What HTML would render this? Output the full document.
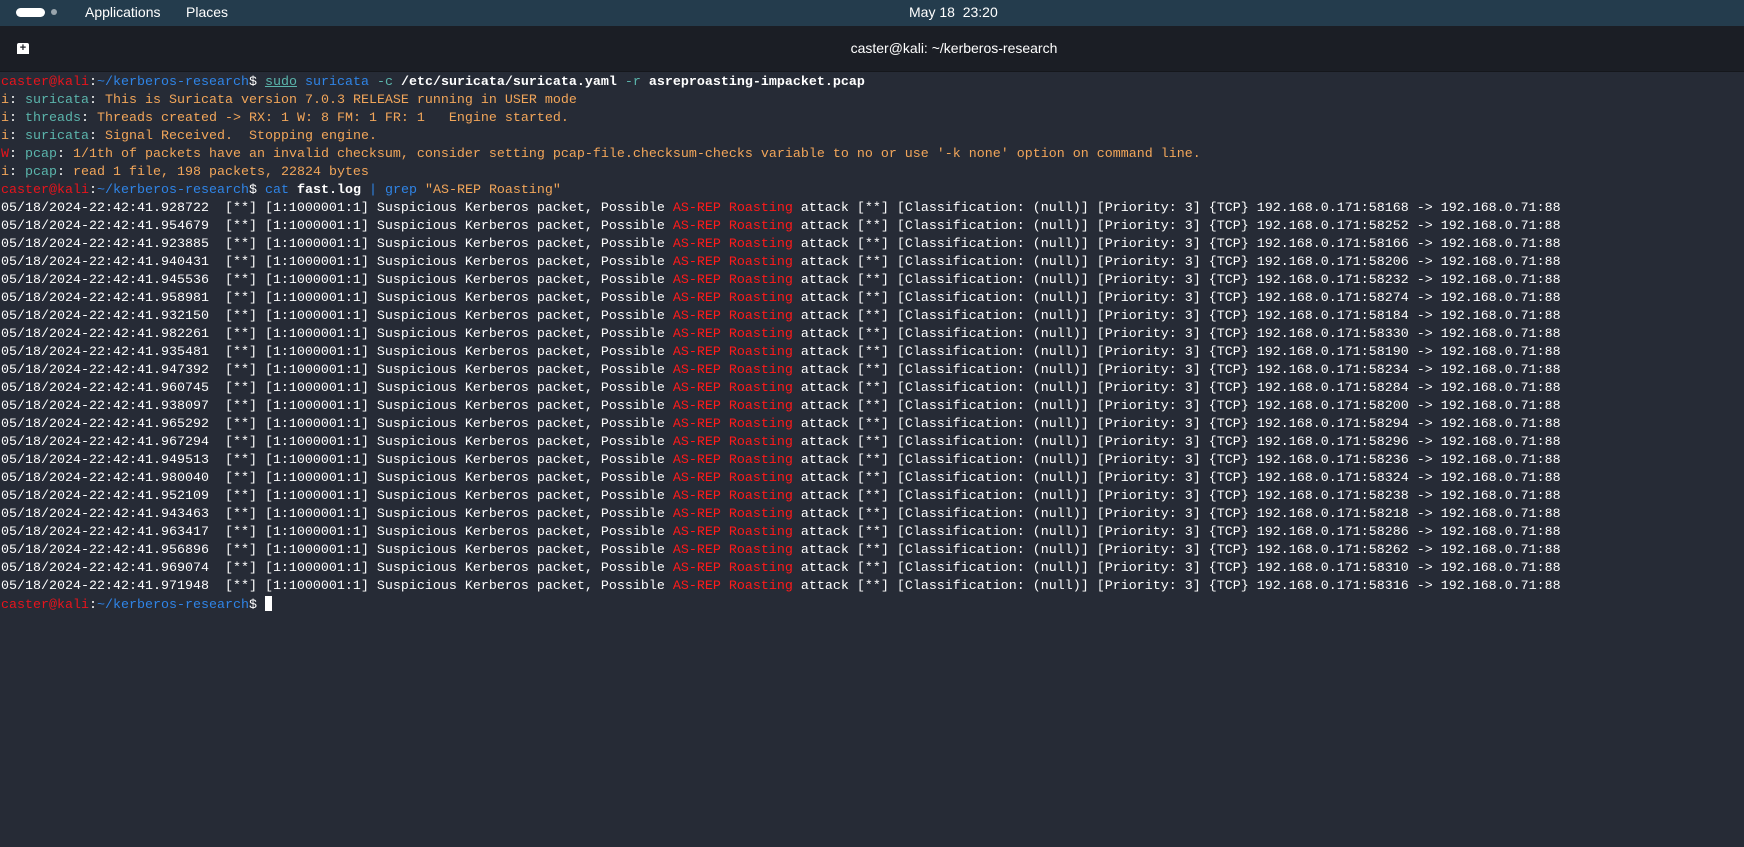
<!DOCTYPE html>
<html><head><meta charset="utf-8"><style>
body{margin:0;width:1744px;height:847px;overflow:hidden;background:#262b36;font-family:"Liberation Sans",sans-serif;position:relative}
#top{position:absolute;left:0;top:0;width:1744px;height:26px;background:#243c4d;color:#fff;font-size:14px}
#top span{position:absolute;top:4px}
#title{position:absolute;left:0;top:26px;width:1744px;height:46px;background:#1b1e25;border-bottom:1px solid #15171c;box-sizing:border-box}
#title .t{position:absolute;left:0;width:1908px;text-align:center;top:14px;color:#fff;font-size:14px}
#term{position:absolute;left:1px;top:74px;font-family:"Liberation Mono",monospace;font-size:13.33px;line-height:18px;color:#fff;white-space:pre}
.r{color:#e8141c}.b{color:#2f84e6}.g{color:#5bb5ac}.o{color:#f2a65a}.R{color:#ff1a1a}.w{color:#fff;font-weight:bold}
.cur{display:inline-block;width:7px;height:15px;background:#fff;vertical-align:-3px}
</style></head><body>
<div id="top">
<div style="position:absolute;left:16px;top:8px;width:29px;height:9px;border-radius:5px;background:#fff"></div>
<div style="position:absolute;left:51px;top:9px;width:6px;height:6px;border-radius:3px;background:#9aa5ad"></div>
<span style="left:85px">Applications</span><span style="left:186px">Places</span>
<span style="left:909px">May 18&nbsp; 23:20</span>
</div>
<div id="title">
<div style="position:absolute;left:17px;top:17px;width:12px;height:11px;background:#fff;border-radius:2px 2px 0 0;color:#1b1e25;font:bold 11px/11px 'Liberation Sans';text-align:center">+</div>
<div class="t">caster@kali: ~/kerberos-research</div>
</div>
<div id="term"><span class="r">caster@kali</span>:<span class="b">~/kerberos-research</span>$ <span class="g" style="text-decoration:underline">sudo</span> <span class="b">suricata</span> <span class="g">-c</span> <span class="w">/etc/suricata/suricata.yaml</span> <span class="g">-r</span> <span class="w">asreproasting-impacket.pcap</span>
<span class="o">i</span>: <span class="g">suricata</span>: <span class="o">This is Suricata version 7.0.3 RELEASE running in USER mode</span>
<span class="o">i</span>: <span class="g">threads</span>: <span class="o">Threads created -&gt; RX: 1 W: 8 FM: 1 FR: 1   Engine started.</span>
<span class="o">i</span>: <span class="g">suricata</span>: <span class="o">Signal Received.  Stopping engine.</span>
<span class="r">W</span>: <span class="g">pcap</span>: <span class="o">1/1th of packets have an invalid checksum, consider setting pcap-file.checksum-checks variable to no or use '-k none' option on command line.</span>
<span class="o">i</span>: <span class="g">pcap</span>: <span class="o">read 1 file, 198 packets, 22824 bytes</span>
<span class="r">caster@kali</span>:<span class="b">~/kerberos-research</span>$ <span class="b">cat</span> <span class="w">fast.log</span> <span class="b">|</span> <span class="b">grep</span> <span class="o">"AS-REP Roasting"</span>
05/18/2024-22:42:41.928722  [**] [1:1000001:1] Suspicious Kerberos packet, Possible <span class="R">AS-REP Roasting</span> attack [**] [Classification: (null)] [Priority: 3] {TCP} 192.168.0.171:58168 -&gt; 192.168.0.71:88
05/18/2024-22:42:41.954679  [**] [1:1000001:1] Suspicious Kerberos packet, Possible <span class="R">AS-REP Roasting</span> attack [**] [Classification: (null)] [Priority: 3] {TCP} 192.168.0.171:58252 -&gt; 192.168.0.71:88
05/18/2024-22:42:41.923885  [**] [1:1000001:1] Suspicious Kerberos packet, Possible <span class="R">AS-REP Roasting</span> attack [**] [Classification: (null)] [Priority: 3] {TCP} 192.168.0.171:58166 -&gt; 192.168.0.71:88
05/18/2024-22:42:41.940431  [**] [1:1000001:1] Suspicious Kerberos packet, Possible <span class="R">AS-REP Roasting</span> attack [**] [Classification: (null)] [Priority: 3] {TCP} 192.168.0.171:58206 -&gt; 192.168.0.71:88
05/18/2024-22:42:41.945536  [**] [1:1000001:1] Suspicious Kerberos packet, Possible <span class="R">AS-REP Roasting</span> attack [**] [Classification: (null)] [Priority: 3] {TCP} 192.168.0.171:58232 -&gt; 192.168.0.71:88
05/18/2024-22:42:41.958981  [**] [1:1000001:1] Suspicious Kerberos packet, Possible <span class="R">AS-REP Roasting</span> attack [**] [Classification: (null)] [Priority: 3] {TCP} 192.168.0.171:58274 -&gt; 192.168.0.71:88
05/18/2024-22:42:41.932150  [**] [1:1000001:1] Suspicious Kerberos packet, Possible <span class="R">AS-REP Roasting</span> attack [**] [Classification: (null)] [Priority: 3] {TCP} 192.168.0.171:58184 -&gt; 192.168.0.71:88
05/18/2024-22:42:41.982261  [**] [1:1000001:1] Suspicious Kerberos packet, Possible <span class="R">AS-REP Roasting</span> attack [**] [Classification: (null)] [Priority: 3] {TCP} 192.168.0.171:58330 -&gt; 192.168.0.71:88
05/18/2024-22:42:41.935481  [**] [1:1000001:1] Suspicious Kerberos packet, Possible <span class="R">AS-REP Roasting</span> attack [**] [Classification: (null)] [Priority: 3] {TCP} 192.168.0.171:58190 -&gt; 192.168.0.71:88
05/18/2024-22:42:41.947392  [**] [1:1000001:1] Suspicious Kerberos packet, Possible <span class="R">AS-REP Roasting</span> attack [**] [Classification: (null)] [Priority: 3] {TCP} 192.168.0.171:58234 -&gt; 192.168.0.71:88
05/18/2024-22:42:41.960745  [**] [1:1000001:1] Suspicious Kerberos packet, Possible <span class="R">AS-REP Roasting</span> attack [**] [Classification: (null)] [Priority: 3] {TCP} 192.168.0.171:58284 -&gt; 192.168.0.71:88
05/18/2024-22:42:41.938097  [**] [1:1000001:1] Suspicious Kerberos packet, Possible <span class="R">AS-REP Roasting</span> attack [**] [Classification: (null)] [Priority: 3] {TCP} 192.168.0.171:58200 -&gt; 192.168.0.71:88
05/18/2024-22:42:41.965292  [**] [1:1000001:1] Suspicious Kerberos packet, Possible <span class="R">AS-REP Roasting</span> attack [**] [Classification: (null)] [Priority: 3] {TCP} 192.168.0.171:58294 -&gt; 192.168.0.71:88
05/18/2024-22:42:41.967294  [**] [1:1000001:1] Suspicious Kerberos packet, Possible <span class="R">AS-REP Roasting</span> attack [**] [Classification: (null)] [Priority: 3] {TCP} 192.168.0.171:58296 -&gt; 192.168.0.71:88
05/18/2024-22:42:41.949513  [**] [1:1000001:1] Suspicious Kerberos packet, Possible <span class="R">AS-REP Roasting</span> attack [**] [Classification: (null)] [Priority: 3] {TCP} 192.168.0.171:58236 -&gt; 192.168.0.71:88
05/18/2024-22:42:41.980040  [**] [1:1000001:1] Suspicious Kerberos packet, Possible <span class="R">AS-REP Roasting</span> attack [**] [Classification: (null)] [Priority: 3] {TCP} 192.168.0.171:58324 -&gt; 192.168.0.71:88
05/18/2024-22:42:41.952109  [**] [1:1000001:1] Suspicious Kerberos packet, Possible <span class="R">AS-REP Roasting</span> attack [**] [Classification: (null)] [Priority: 3] {TCP} 192.168.0.171:58238 -&gt; 192.168.0.71:88
05/18/2024-22:42:41.943463  [**] [1:1000001:1] Suspicious Kerberos packet, Possible <span class="R">AS-REP Roasting</span> attack [**] [Classification: (null)] [Priority: 3] {TCP} 192.168.0.171:58218 -&gt; 192.168.0.71:88
05/18/2024-22:42:41.963417  [**] [1:1000001:1] Suspicious Kerberos packet, Possible <span class="R">AS-REP Roasting</span> attack [**] [Classification: (null)] [Priority: 3] {TCP} 192.168.0.171:58286 -&gt; 192.168.0.71:88
05/18/2024-22:42:41.956896  [**] [1:1000001:1] Suspicious Kerberos packet, Possible <span class="R">AS-REP Roasting</span> attack [**] [Classification: (null)] [Priority: 3] {TCP} 192.168.0.171:58262 -&gt; 192.168.0.71:88
05/18/2024-22:42:41.969074  [**] [1:1000001:1] Suspicious Kerberos packet, Possible <span class="R">AS-REP Roasting</span> attack [**] [Classification: (null)] [Priority: 3] {TCP} 192.168.0.171:58310 -&gt; 192.168.0.71:88
05/18/2024-22:42:41.971948  [**] [1:1000001:1] Suspicious Kerberos packet, Possible <span class="R">AS-REP Roasting</span> attack [**] [Classification: (null)] [Priority: 3] {TCP} 192.168.0.171:58316 -&gt; 192.168.0.71:88
<span class="r">caster@kali</span>:<span class="b">~/kerberos-research</span>$ <span class="cur"></span></div>
</body></html>
